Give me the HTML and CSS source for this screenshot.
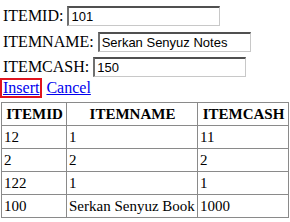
FILE: index.html
```html
<!DOCTYPE html>
<html lang="en">
<head>
    <meta charset="UTF-8">
    <title>Items</title>
    <link rel="stylesheet" href="styles.css">
</head>
<body>
    <div class="item-form">
        <div class="row">ITEMID:&nbsp;<input type="text" value="101"></div>
        <div class="row">ITEMNAME:&nbsp;<input type="text" value="Serkan Senyuz Notes"></div>
        <div class="row">ITEMCASH:&nbsp;<input type="text" value="150"></div>
    </div>

    <div class="actions">
        <span class="focused"><a href="#">Insert</a></span> <a href="#">Cancel</a>
    </div>

    <table class="grid">
        <colgroup>
            <col class="c-id">
            <col class="c-name">
            <col class="c-cash">
        </colgroup>
        <tr>
            <th>ITEMID</th>
            <th>ITEMNAME</th>
            <th>ITEMCASH</th>
        </tr>
        <tr><td>12</td><td>1</td><td>11</td></tr>
        <tr><td>2</td><td>2</td><td>2</td></tr>
        <tr><td>122</td><td>1</td><td>1</td></tr>
        <tr><td>100</td><td>Serkan Senyuz Book</td><td>1000</td></tr>
    </table>
</body>
</html>
```

FILE: styles.css
```css
body {
    margin: 0;
    font-family: 'Liberation Serif', 'Times New Roman', serif;
    font-size: 16px;
    color: #000;
    background: #fff;
}

.item-form {
    padding-top: 6px;
    display: flex;
    flex-direction: column;
    gap: 5.5px;
}

.row {
    display: flex;
    align-items: center;
    height: 20px;
    padding-left: 3px;
    white-space: nowrap;
}

.row input {
    box-sizing: border-box;
    width: 153px;
    height: 20px;
    margin: 0;
    padding: 0 2px;
    font-family: 'Liberation Sans', Arial, sans-serif;
    font-size: 13px;
    color: #000;
    background: #fff;
    border-top: 2px solid #505050;
    border-left: 2px solid #707070;
    border-right: 1px solid #c8c8c8;
    border-bottom: 1px solid #c8c8c8;
    outline: none;
}

.actions {
    margin-top: 1px;
    height: 20px;
    line-height: 16px;
}

.actions a {
    color: #0000ee;
}

.focused {
    display: inline-block;
    border: 2px solid #e0141e;
    padding: 0 1px;
}

.grid {
    margin: 4px 0 0 1px;
    border-collapse: collapse;
    border: 1px solid #8a8a8a;
    table-layout: fixed;
    width: 287px;
    font-size: 15px;
}

.c-id { width: 65px; }
.c-name { width: 131px; }
.c-cash { width: 91px; }

.grid th,
.grid td {
    border: 1px solid #8a8a8a;
    padding: 2px 1px 2px 2px;
    line-height: 18px;
    white-space: nowrap;
    overflow: hidden;
}

.grid td {
    text-align: left;
}
```
